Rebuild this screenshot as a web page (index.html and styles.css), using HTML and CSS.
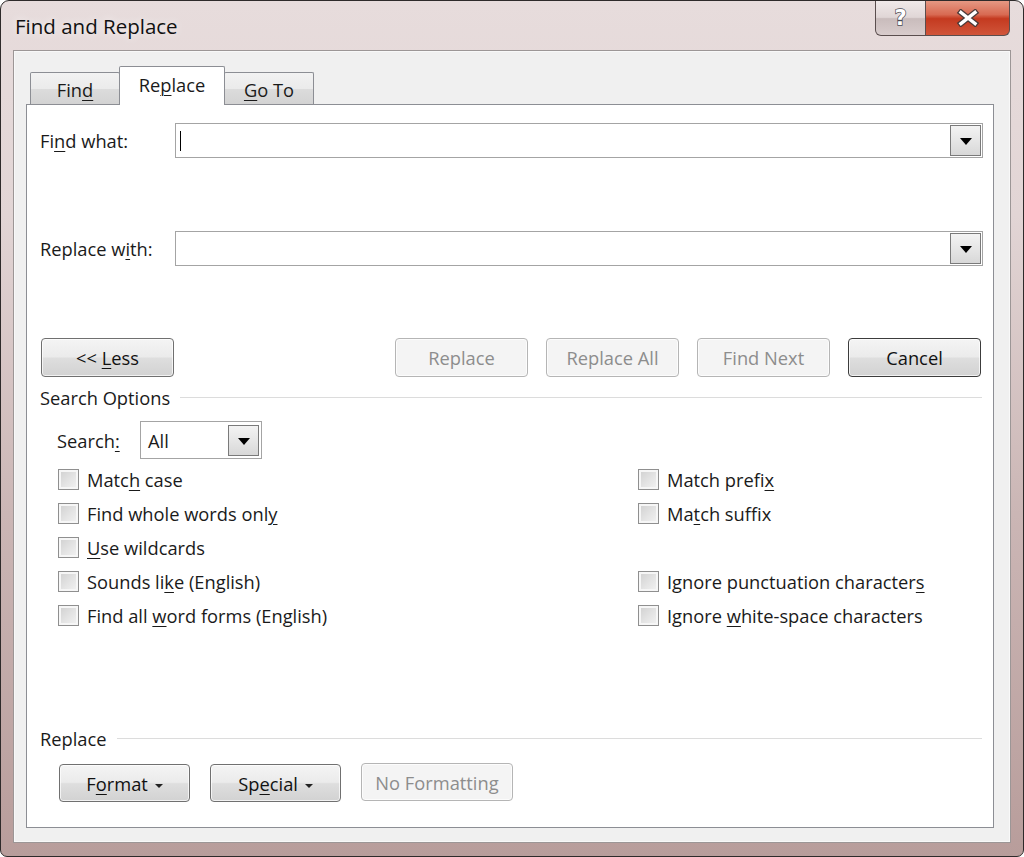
FILE: index.html
```html
<!DOCTYPE html>
<html lang="en">
<head>
    <meta charset="UTF-8">
    <title>Find and Replace</title>
    <link rel="stylesheet" href="styles.css">
</head>
<body>

<div class="window">
    <div class="titlebar">
        <span class="title">Find and Replace</span>
        <div class="caption-buttons">
            <div class="cap-btn help">?</div>
            <div class="cap-btn close">
                <svg width="26" height="18" viewBox="0 0 26 18">
                    <path d="M6 3.5 L20 14.5 M20 3.5 L6 14.5" stroke="#4a3a38" stroke-width="6" stroke-linecap="square"/>
                    <path d="M6 3.5 L20 14.5 M20 3.5 L6 14.5" stroke="#ffffff" stroke-width="3.4" stroke-linecap="square"/>
                </svg>
            </div>
        </div>
    </div>

    <div class="client">
        <div class="tabs">
            <div class="tab">Fin<u>d</u></div>
            <div class="tab active">Re<u>p</u>lace</div>
            <div class="tab"><u>G</u>o To</div>
        </div>

        <div class="panel">
            <div class="field-row">
                <label class="field-label">Fi<u>n</u>d what:</label>
                <div class="combo">
                    <span class="caret"></span>
                    <span class="combo-btn"><span class="arrow"></span></span>
                </div>
            </div>

            <div class="field-row second">
                <label class="field-label">Replace w<u>i</u>th:</label>
                <div class="combo">
                    <span class="combo-btn"><span class="arrow"></span></span>
                </div>
            </div>

            <div class="button-row">
                <button class="btn">&lt;&lt; <u>L</u>ess</button>
                <div class="button-group">
                    <button class="btn" disabled>Replace</button>
                    <button class="btn" disabled>Replace All</button>
                    <button class="btn" disabled>Find Next</button>
                    <button class="btn default">Cancel</button>
                </div>
            </div>

            <div class="group-header">
                <span>Search Options</span>
                <span class="rule"></span>
            </div>

            <div class="search-row">
                <label class="search-label">Search<u>:</u></label>
                <div class="select">
                    <span class="select-value">All</span>
                    <span class="combo-btn"><span class="arrow"></span></span>
                </div>
            </div>

            <div class="options">
                <div class="option"><span class="check"></span><span>Matc<u>h</u> case</span></div>
                <div class="option"><span class="check"></span><span>Match prefi<u>x</u></span></div>
                <div class="option"><span class="check"></span><span>Find whole words onl<u>y</u></span></div>
                <div class="option"><span class="check"></span><span>Ma<u>t</u>ch suffix</span></div>
                <div class="option"><span class="check"></span><span><u>U</u>se wildcards</span></div>
                <div class="option"></div>
                <div class="option"><span class="check"></span><span>Sounds li<u>k</u>e (English)</span></div>
                <div class="option"><span class="check"></span><span>Ignore punctuation character<u>s</u></span></div>
                <div class="option"><span class="check"></span><span>Find all <u>w</u>ord forms (English)</span></div>
                <div class="option"><span class="check"></span><span>Ignore <u>w</u>hite-space characters</span></div>
            </div>

            <div class="group-header replace-header">
                <span>Replace</span>
                <span class="rule"></span>
            </div>

            <div class="format-row">
                <button class="btn small">F<u>o</u>rmat <span class="mini-arrow"></span></button>
                <button class="btn small">Sp<u>e</u>cial <span class="mini-arrow"></span></button>
                <button class="btn wide" disabled>No Formatting</button>
            </div>
        </div>
    </div>
</div>

</body>
</html>
```

FILE: styles.css
```css
html, body {
    margin: 0;
    padding: 0;
    background: #ffffff;
}
body {
    font-family: 'Open Sans', 'Noto Sans', sans-serif;
    font-size: 18.3px;
    color: #1a1a1a;
}
u {
    text-decoration-thickness: 1px;
    text-underline-offset: 3px;
}
.window {
    box-sizing: border-box;
    width: 1024px;
    height: 857px;
    border: 1px solid #2e2a2a;
    border-radius: 9px 9px 7px 7px;
    padding: 0 12px 13px 12px;
    background: linear-gradient(180deg, #e7dcdc 0%, #e2d5d5 25%, #cbb6b5 60%, #b89d9b 100%);
    display: flex;
    flex-direction: column;
}
.titlebar {
    height: 49px;
    display: flex;
    justify-content: space-between;
    align-items: flex-start;
}
.title {
    padding-top: 11px;
    padding-left: 2px;
    font-size: 20.5px;
    color: #111;
    text-shadow: 0 0 8px rgba(255, 255, 255, 0.9);
}
.caption-buttons {
    display: flex;
    margin-right: 1px;
}
.cap-btn {
    box-sizing: border-box;
    height: 35px;
    border: 1px solid #5a4e4e;
    border-top: none;
    display: flex;
    align-items: center;
    justify-content: center;
}
.help {
    width: 51px;
    border-radius: 0 0 0 6px;
    background: linear-gradient(180deg, #f0e9e9 0%, #e0d6d6 48%, #c9bcbc 52%, #d8cccc 100%);
    color: #ffffff;
    font-family: 'DejaVu Sans', sans-serif;
    font-weight: bold;
    font-size: 21px;
    -webkit-text-stroke: 1.4px #4a4a55;
    paint-order: stroke fill;
}
.close {
    width: 84px;
    border-left: none;
    border-radius: 0 0 6px 0;
    background: linear-gradient(180deg, #e59883 0%, #d86a52 40%, #c43a20 52%, #d0553a 100%);
}
.client {
    flex: 1;
    background: #f0f0f0;
    border: 1px solid #9c9696;
    box-shadow: inset 0 0 0 1px #f8f8f8;
    padding: 15px 16px 14px 12px;
    display: flex;
    flex-direction: column;
}
.tabs {
    display: flex;
    align-items: flex-end;
    padding-left: 4px;
    height: 38px;
    position: relative;
    z-index: 1;
}
.tab {
    box-sizing: border-box;
    width: 90px;
    height: 32px;
    border: 1px solid #8c8e94;
    border-bottom: none;
    border-radius: 2px 2px 0 0;
    background: linear-gradient(180deg, #f2f2f2 0%, #ebebeb 50%, #dcdcdc 51%, #d3d3d3 100%);
    text-align: center;
    line-height: 34px;
    margin-right: -1px;
}
.tab.active {
    width: 106px;
    height: 39px;
    margin-bottom: -1px;
    background: #ffffff;
    line-height: 36px;
}
.panel {
    flex: 1;
    background: #ffffff;
    border: 1px solid #8c8e94;
    padding: 18px 10px 0 13px;
    display: flex;
    flex-direction: column;
}
.field-row {
    display: flex;
    align-items: center;
    height: 35px;
}
.field-row.second {
    margin-top: 73px;
}
.field-label {
    width: 135px;
}
.combo {
    flex: 1;
    height: 35px;
    box-sizing: border-box;
    border: 1px solid #a4a4a4;
    display: flex;
    align-items: center;
    justify-content: space-between;
    padding: 1px;
}
.caret {
    width: 1px;
    height: 20px;
    background: #000;
    margin-left: 3px;
}
.combo-btn {
    margin-left: auto;
    box-sizing: border-box;
    width: 31px;
    height: 31px;
    border: 1px solid #7a7a7a;
    background: linear-gradient(180deg, #f3f3f3 0%, #e6e6e6 50%, #d8d8d8 100%);
    display: flex;
    align-items: center;
    justify-content: center;
}
.arrow {
    width: 0;
    height: 0;
    border-left: 6px solid transparent;
    border-right: 6px solid transparent;
    border-top: 7px solid #000;
    margin-top: 2px;
}
.button-row {
    margin-top: 72px;
    display: flex;
    justify-content: space-between;
    padding-left: 1px;
    padding-right: 2px;
}
.button-group {
    display: flex;
    gap: 18px;
}
.btn {
    box-sizing: border-box;
    width: 133px;
    height: 39px;
    font-family: inherit;
    font-size: inherit;
    color: #111;
    border: 1px solid #707070;
    border-radius: 4px;
    background: linear-gradient(180deg, #f4f4f4 0%, #ebebeb 48%, #dedede 52%, #d2d2d2 100%);
    box-shadow: inset 0 0 0 1px rgba(255, 255, 255, 0.7);
    padding: 0;
}
.btn:disabled {
    color: #8d8d8d;
    border-color: #b5b5b5;
    background: #f4f4f4;
}
.btn.default {
    border-color: #3c3c3c;
}
.group-header {
    margin-top: 10px;
    height: 20px;
    display: flex;
    align-items: center;
    gap: 10px;
    padding-right: 1px;
}
.rule {
    flex: 1;
    height: 1px;
    background: #dcdcdc;
}
.search-row {
    margin-top: 14px;
    padding-left: 17px;
    display: flex;
    align-items: center;
}
.search-label {
    width: 83px;
}
.select {
    box-sizing: border-box;
    width: 122px;
    height: 38px;
    border: 1px solid #a4a4a4;
    display: flex;
    align-items: center;
    padding: 2px;
}
.select-value {
    padding-left: 5px;
}
.options {
    margin-top: 3px;
    padding-left: 18px;
    display: grid;
    grid-template-columns: 580px auto;
}
.option {
    height: 34px;
    display: flex;
    align-items: center;
}
.check {
    box-sizing: border-box;
    width: 21px;
    height: 21px;
    border: 1px solid #8f8f8f;
    box-shadow: inset 0 0 0 2px #f6f6f6;
    background: linear-gradient(135deg, #cfcfcf 0%, #e4e4e4 55%, #f3f3f3 100%);
    margin-right: 8px;
}
.replace-header {
    margin-top: 96px;
}
.format-row {
    margin-top: 15px;
    padding-left: 19px;
    display: flex;
    align-items: flex-start;
    gap: 20px;
}
.btn.small {
    width: 131px;
    height: 38px;
    margin-top: 1px;
}
.btn.wide {
    width: 152px;
    height: 38px;
}
.mini-arrow {
    display: inline-block;
    width: 0;
    height: 0;
    border-left: 4px solid transparent;
    border-right: 4px solid transparent;
    border-top: 4px solid #222;
    vertical-align: middle;
    margin-left: 2px;
}
```
